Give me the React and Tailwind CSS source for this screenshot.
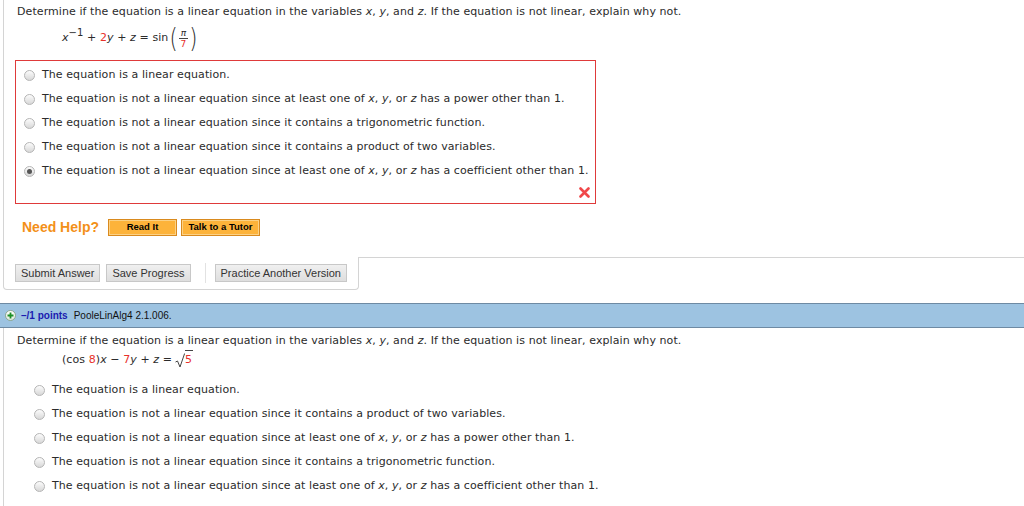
import React from "react";

const Radio = ({ checked }) => (
  <span className="inline-flex items-center justify-center w-[11px] h-[11px] rounded-full border border-[#b5b5b5] bg-gradient-to-b from-[#fcfcfc] to-[#d8d8d8] shrink-0">
    {checked && <span className="w-[5px] h-[5px] rounded-full bg-[#555]" />}
  </span>
);

const V = ({ children }) => <i className="font-['DejaVu_Sans',sans-serif]">{children}</i>;
const R = ({ children }) => <span className="text-[#e8302a]">{children}</span>;

const Option = ({ checked, children }) => (
  <div className="flex items-center h-[24px]">
    <Radio checked={checked} />
    <span className="ml-[7px]">{children}</span>
  </div>
);

const xyz = (
  <>
    <V>x</V>, <V>y</V>, or <V>z</V>
  </>
);

const GreyBtn = ({ children }) => (
  <button className="h-[18px] px-[5px] border border-[#c8c8c8] bg-gradient-to-b from-[#f0f0f0] to-[#dedede] text-[#333] text-[11px] leading-none tracking-normal font-['Liberation_Sans',sans-serif]">
    {children}
  </button>
);

const OrangeBtn = ({ children, w }) => (
  <button className={`h-[17px] ${w} border border-[#d98a1e] bg-[#fdb33a] shadow-[inset_0_0_0_1px_#fcd184] text-black text-[9.5px] font-bold leading-none tracking-normal font-['Liberation_Sans',sans-serif]`}>
    {children}
  </button>
);

export default function App() {
  return (
    <div className="h-[506px] w-[1024px] overflow-hidden bg-white text-[#2b2b2b] text-[11px] tracking-[0.08px] font-['DejaVu_Sans',sans-serif]">
      {/* question 1 */}
      <div className="pl-[3px]">
        <div className="border-l border-[#d4d4d4] pl-[13px] pt-[5px] h-[257px]">
          <p className="leading-[14px]">
            Determine if the equation is a linear equation in the variables <V>x</V>, <V>y</V>, and <V>z</V>. If the
            equation is not linear, explain why not.
          </p>
          <div className="ml-[45px] mt-[7px] h-[24px] flex items-center">
            <span>
              <V>x</V>
              <sup className="text-[10px]">−1</sup> + <R>2</R>
              <V>y</V> + <V>z</V> = sin
            </span>
            <span className="text-[21px] font-light leading-none scale-y-125 ml-[1px]">(</span>
            <span className="inline-flex flex-col items-center text-[9px] leading-[10px] mx-[1px]">
              <span className="border-b border-[#444] px-[2px] italic">π</span>
              <R>7</R>
            </span>
            <span className="text-[21px] font-light leading-none scale-y-125">)</span>
          </div>
          <div className="ml-[-2px] mt-[10px] w-[581px] h-[144px] border border-[#df3a3a] pl-[8px] pt-[2px] relative">
            <Option>The equation is a linear equation.</Option>
            <Option>The equation is not a linear equation since at least one of {xyz} has a power other than 1.</Option>
            <Option>The equation is not a linear equation since it contains a trigonometric function.</Option>
            <Option>The equation is not a linear equation since it contains a product of two variables.</Option>
            <Option checked>
              The equation is not a linear equation since at least one of {xyz} has a coefficient other than 1.
            </Option>
            <svg className="absolute right-[5px] bottom-[5px]" width="11" height="11" viewBox="0 0 11 11">
              <path d="M1.5 1.5 L9.5 9.5 M9.5 1.5 L1.5 9.5" stroke="#f0484a" strokeWidth="2.6" strokeLinecap="round" />
            </svg>
          </div>
          <div className="flex items-center mt-[14px] ml-[5px] h-[18px]">
            <span className="text-[#f39019] text-[14px] font-bold tracking-normal font-['Liberation_Sans',sans-serif] mr-[9px]">
              Need Help?
            </span>
            <OrangeBtn w="w-[69px]">Read It</OrangeBtn>
            <span className="w-[4px]" />
            <OrangeBtn w="w-[79px]">Talk to a Tutor</OrangeBtn>
          </div>
        </div>
        <div className="flex">
          <div className="w-[356px] h-[33px] border-l border-r border-b border-[#d4d4d4] rounded-b-[4px] flex items-start pt-[7px] pl-[11px]">
            <GreyBtn>Submit Answer</GreyBtn>
            <span className="w-[6px]" />
            <GreyBtn>Save Progress</GreyBtn>
            <span className="w-[15px] self-stretch mt-[-1px] mb-[6px] border-r border-[#e2e2e2] mr-[9px]" />
            <GreyBtn>Practice Another Version</GreyBtn>
          </div>
          <div className="flex-1 border-t border-[#d4d4d4]" />
        </div>
      </div>

      {/* question 2 header */}
      <div className="mt-[13px] h-[25px] bg-[#9dc3e1] border-t border-b border-[#6e8aa3] flex items-center pl-[5px] font-['Liberation_Sans',sans-serif] text-[10px] tracking-normal">
        <span className="w-[11px] h-[11px] rounded-full bg-gradient-to-b from-white to-[#dfe9df] border border-[#8fa98f] flex items-center justify-center">
          <svg width="7" height="7" viewBox="0 0 7 7">
            <path d="M3.5 0.5 V6.5 M0.5 3.5 H6.5" stroke="#1d8f26" strokeWidth="1.8" />
          </svg>
        </span>
        <span className="ml-[5px] text-[#1b1bb0] font-bold">–/1 points</span>
        <span className="ml-[6px] text-[#111]">PooleLinAlg4 2.1.006.</span>
      </div>

      {/* question 2 */}
      <div className="pl-[3px]">
        <div className="border-l border-[#d4d4d4] pl-[13px] pt-[6px] h-[200px]">
          <p className="leading-[14px]">
            Determine if the equation is a linear equation in the variables <V>x</V>, <V>y</V>, and <V>z</V>. If the
            equation is not linear, explain why not.
          </p>
          <div className="ml-[45px] mt-[2px] h-[20px] flex items-center">
            <span>
              (cos <R>8</R>)<V>x</V> − <R>7</R>
              <V>y</V> + <V>z</V> ={" "}
            </span>
            <svg className="ml-[3px]" width="10" height="15" viewBox="0 0 10 15">
              <path d="M0.5 9 L2.5 8 L5 14 L9.5 0.8 L10 0.8" stroke="#444" strokeWidth="1" fill="none" />
            </svg>
            <span className="border-t border-[#444] mt-[-1px] pt-[1px] pr-[1px]">
              <R>5</R>
            </span>
          </div>
          <div className="ml-[17px] mt-[8px]">
            <Option>The equation is a linear equation.</Option>
            <Option>The equation is not a linear equation since it contains a product of two variables.</Option>
            <Option>The equation is not a linear equation since at least one of {xyz} has a power other than 1.</Option>
            <Option>The equation is not a linear equation since it contains a trigonometric function.</Option>
            <Option>
              The equation is not a linear equation since at least one of {xyz} has a coefficient other than 1.
            </Option>
          </div>
        </div>
      </div>
    </div>
  );
}
